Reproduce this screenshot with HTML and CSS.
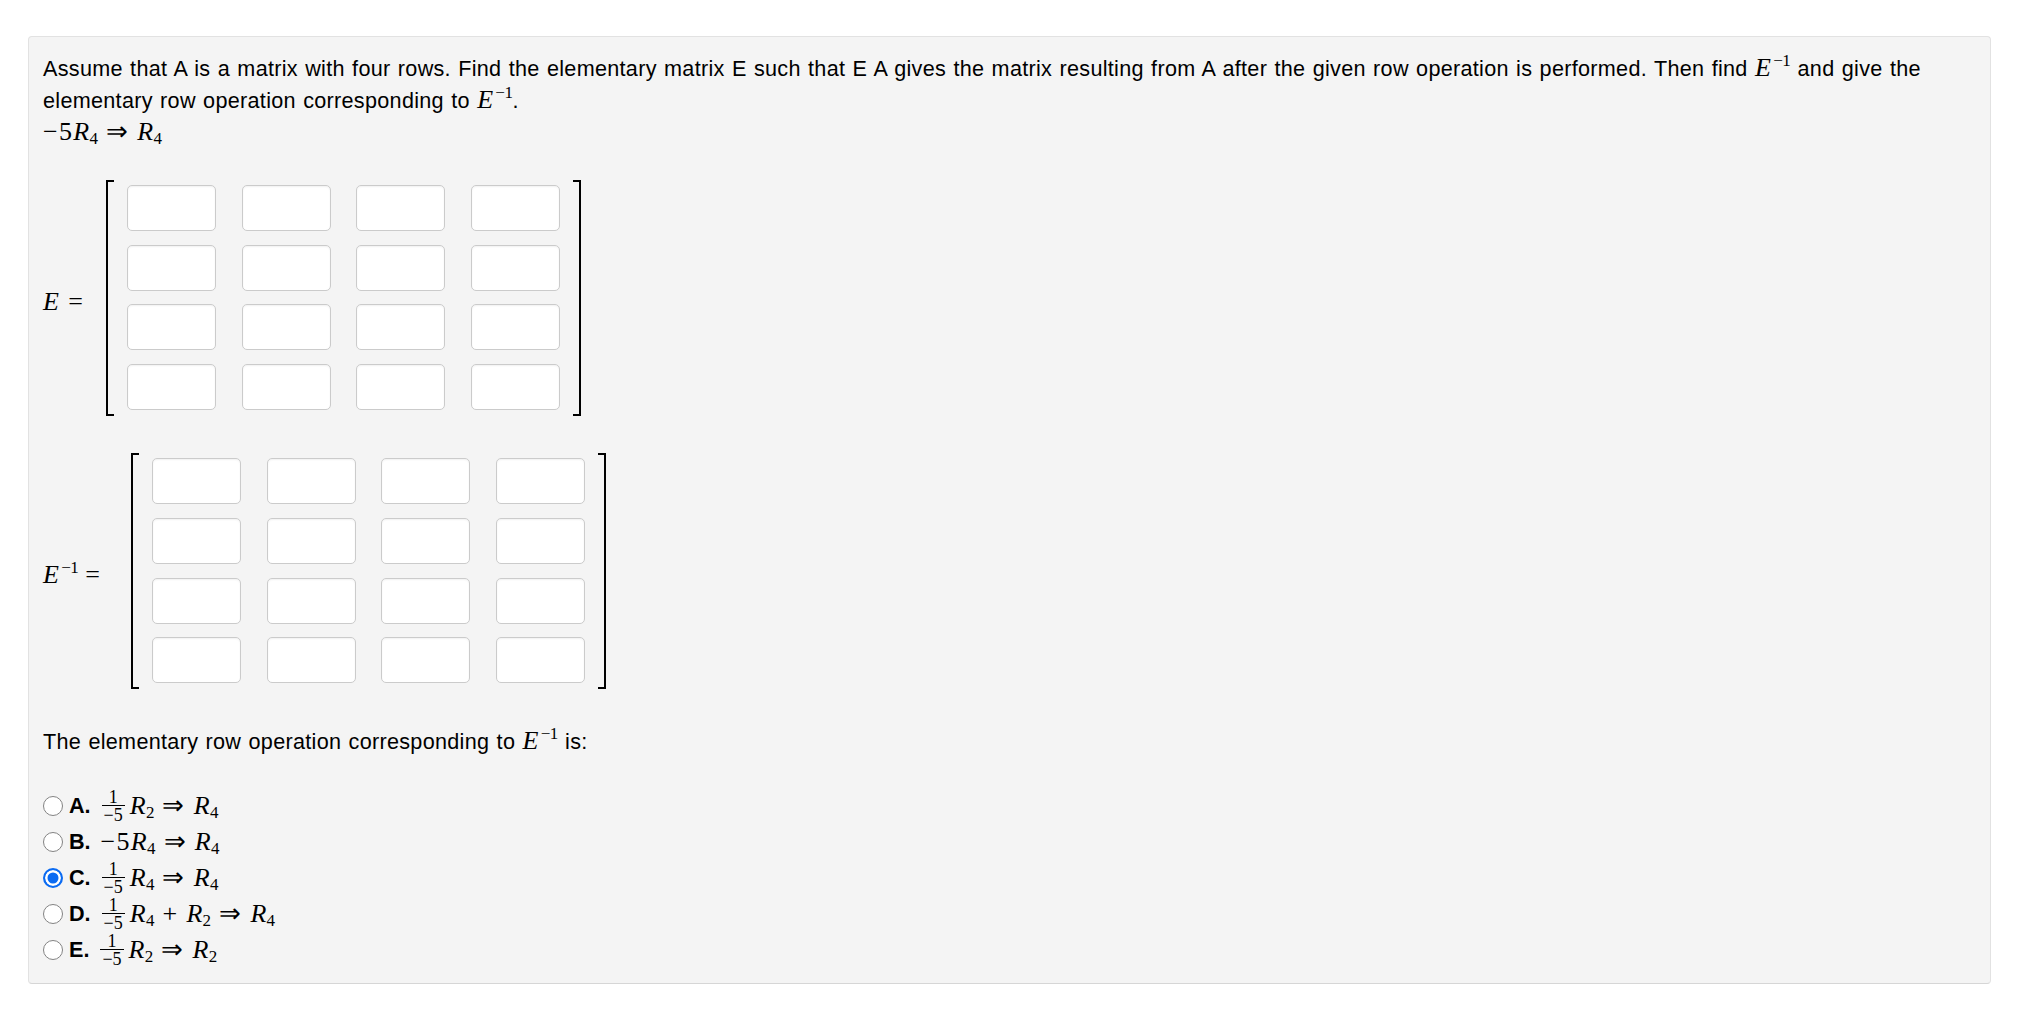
FILE: index.html
```html
<!DOCTYPE html>
<html>
<head>
<meta charset="utf-8">
<link rel="stylesheet" href="styles.css">
</head>
<body>
<div class="card">
  <p class="q">Assume that A is a matrix with four rows. Find the elementary matrix E such that E A gives the matrix resulting from A after the given row operation is performed. Then find <span class="m"><i>E</i><sup>−1</sup></span> and give the elementary row operation corresponding to <span class="m"><i>E</i><sup>−1</sup></span>.<br><span class="m">−5<i>R</i><sub>4</sub><span class="op">⇒</span><i>R</i><sub>4</sub></span></p>

  <div class="mrow first">
    <span class="lbl m"><i>E</i><span class="op eq">=</span></span>
    <span class="br left"></span>
    <div class="grid">
      <input><input><input><input>
      <input><input><input><input>
      <input><input><input><input>
      <input><input><input><input>
    </div>
    <span class="br right"></span>
  </div>

  <div class="mrow second">
    <span class="lbl m"><i>E</i><sup>−1</sup><span class="op eq">=</span></span>
    <span class="br left"></span>
    <div class="grid">
      <input><input><input><input>
      <input><input><input><input>
      <input><input><input><input>
      <input><input><input><input>
    </div>
    <span class="br right"></span>
  </div>

  <p class="q after">The elementary row operation corresponding to <span class="m"><i>E</i><sup>−1</sup></span> is:</p>

  <ul class="opts">
    <li><input type="radio" name="o"><b>A.</b><span class="m"><span class="frac"><span class="num">1</span><span class="den">−5</span></span><i>R</i><sub>2</sub><span class="op">⇒</span><i>R</i><sub>4</sub></span></li>
    <li><input type="radio" name="o"><b>B.</b><span class="m">−5<i>R</i><sub>4</sub><span class="op">⇒</span><i>R</i><sub>4</sub></span></li>
    <li><input type="radio" name="o" checked><b>C.</b><span class="m"><span class="frac"><span class="num">1</span><span class="den">−5</span></span><i>R</i><sub>4</sub><span class="op">⇒</span><i>R</i><sub>4</sub></span></li>
    <li><input type="radio" name="o"><b>D.</b><span class="m"><span class="frac"><span class="num">1</span><span class="den">−5</span></span><i>R</i><sub>4</sub><span class="op">+</span><i>R</i><sub>2</sub><span class="op">⇒</span><i>R</i><sub>4</sub></span></li>
    <li><input type="radio" name="o"><b>E.</b><span class="m"><span class="frac"><span class="num">1</span><span class="den">−5</span></span><i>R</i><sub>2</sub><span class="op">⇒</span><i>R</i><sub>2</sub></span></li>
  </ul>
</div>
</body>
</html>
```
FILE: styles.css
```css
html, body {
  margin: 0;
  padding: 0;
  background: #ffffff;
}
body {
  padding: 36px 47px 0 28px;
  font-family: "Liberation Sans", Arial, Helvetica, sans-serif;
  font-size: 21.6px;
  color: #000;
}
.card {
  background: #f4f4f4;
  border: 1px solid #e2e2e2;
  border-bottom-color: #d6d6d6;
  border-radius: 4px;
  padding: 15px 14px 15px 14px;
}
.q {
  margin: 0;
  line-height: 31.2px;
  letter-spacing: 0.3px;
  word-spacing: 1px;
}
.m {
  font-family: "Liberation Serif", "Times New Roman", serif;
  font-size: 26px;
  letter-spacing: 1.3px;
  word-spacing: 0;
  white-space: nowrap;
}
.m i {
  font-style: italic;
  margin-right: 1px;
}
.m sup {
  font-size: 17px;
  letter-spacing: -0.5px;
  vertical-align: 10px;
  line-height: 0;
  margin-left: 0;
}
.m sub {
  font-size: 17px;
  letter-spacing: 0;
  vertical-align: -4px;
  line-height: 0;
  margin-left: -2px;
}
.op {
  margin: 0 8px;
}
.op.eq {
  margin: 0 0 0 7px;
}
.mrow {
  display: flex;
  align-items: center;
}
.mrow.first {
  margin-top: 31px;
}
.mrow.second {
  margin-top: 37px;
}
.lbl {
  line-height: 30px;
  padding-top: 8px;
}
.first .lbl {
  width: 63px;
}
.second .lbl {
  width: 88px;
}
.br {
  align-self: stretch;
  width: 6px;
  border: 2px solid #000;
}
.br.left {
  border-right: none;
  margin-right: 13px;
}
.br.right {
  border-left: none;
  margin-left: 13px;
}
.grid {
  display: grid;
  grid-template-columns: repeat(4, 89px);
  grid-auto-rows: 46px;
  column-gap: 25.5px;
  row-gap: 13.7px;
  padding: 5.5px 0;
}
.grid input {
  box-sizing: border-box;
  width: 89px;
  height: 46px;
  margin: 0;
  background: #fff;
  border: 1px solid #cbcbcb;
  border-radius: 5px;
  box-shadow: inset 0 1px 2px rgba(0,0,0,0.06);
  outline: none;
}
.after {
  margin-top: 36px;
}
.opts {
  list-style: none;
  margin: 31px 0 0 0;
  padding: 0;
}
.opts li {
  display: flex;
  align-items: center;
  height: 36px;
}
.opts input[type=radio] {
  -webkit-appearance: none;
  appearance: none;
  box-sizing: border-box;
  width: 20px;
  height: 20px;
  margin: 0 6px 0 0;
  border: 1.5px solid #838383;
  border-radius: 50%;
  background: #fff;
  flex: none;
}
.opts input[type=radio]:checked {
  border: 2px solid #0b6bf2;
  background: #0b6bf2;
  box-shadow: inset 0 0 0 2.5px #fff;
}
.opts b {
  font-weight: bold;
  margin-right: 10px;
}
.frac {
  display: inline-flex;
  flex-direction: column;
  align-items: center;
  font-size: 18px;
  line-height: 16px;
  letter-spacing: 0;
  vertical-align: 11px;
  margin-right: 4px;
  padding: 0 1px;
}
.frac .den {
  border-top: 1.3px solid #000;
  padding: 1px 2px 0;
}
```
